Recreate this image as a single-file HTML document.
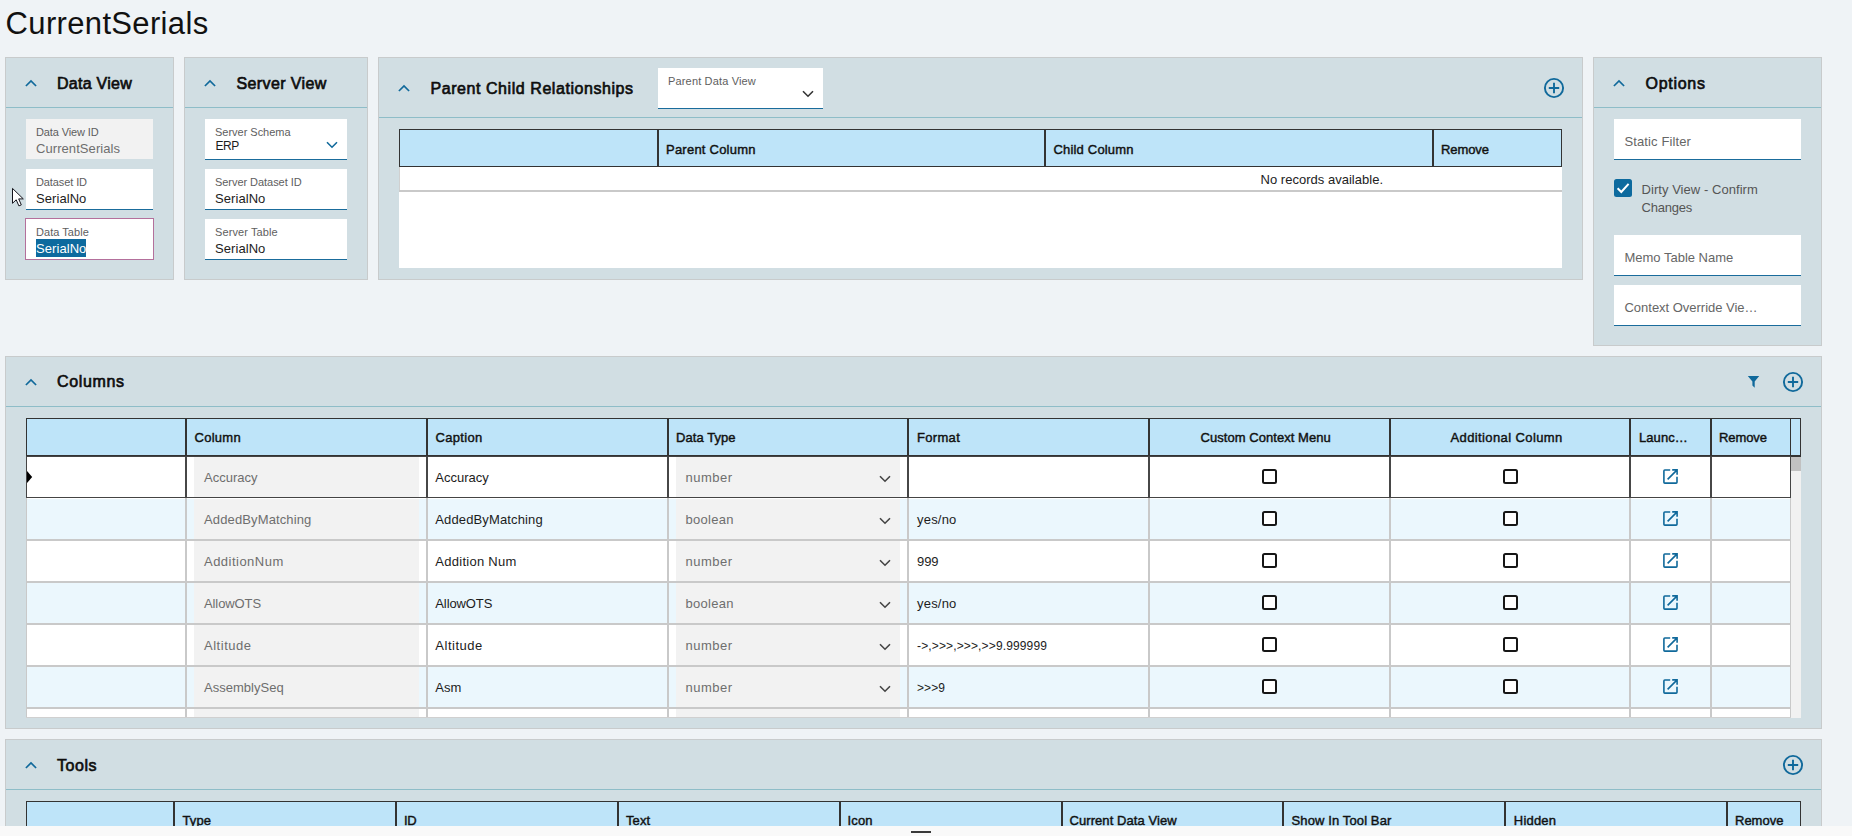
<!DOCTYPE html>
<html lang="en"><head><meta charset="utf-8"><title>CurrentSerials</title>
<style>
html,body{margin:0;padding:0}
body{width:1852px;height:836px;overflow:hidden;position:relative;background:#eff3f6;font-family:"Liberation Sans",sans-serif}
span{position:absolute;white-space:nowrap;line-height:1;display:block}
div,svg.a{position:absolute}
.panel{background:#d1dee3;border:1px solid #c8cbcc;box-sizing:border-box}
.hl{height:1px;background:#8ebdc8}
.th{background:#bee4f9;box-sizing:border-box}
.d{background:#333}
.g{background:#c9c9c9}
.cb{width:15px;height:15px;box-sizing:border-box;border:2px solid #161616;border-radius:2.5px;background:#fff}
</style></head><body>

<span style="left:5.6px;top:7.76px;font-size:31px;color:#111;font-weight:400;letter-spacing:0.34px">CurrentSerials</span>
<div class="panel" style="left:5px;top:57px;width:169px;height:223px"></div>
<div class="hl" style="left:6px;top:107px;width:167px"></div>
<svg class="a" style="left:24px;top:78.2px" width="14" height="10" viewBox="0 0 14 10"><path d="M1.9 8 L7 2.9 L12.1 8" fill="none" stroke="#10699b" stroke-width="1.7"/></svg>
<span style="left:57.0px;top:75.76px;font-size:16px;color:#0d0d0d;font-weight:400;letter-spacing:0.27px;-webkit-text-stroke:0.65px #0d0d0d">Data View</span>
<div class="fld" style="left:26px;top:119px;width:127px;height:40px;background:#f2f2f2"></div>
<span style="left:36.0px;top:126.69px;font-size:11px;color:#5e5e5e;font-weight:400;letter-spacing:-0.12px;">Data View ID</span>
<span style="left:36.0px;top:141.80px;font-size:13px;color:#6e6e6e;font-weight:400;letter-spacing:0.07px;">CurrentSerials</span>
<div class="fld" style="left:26px;top:169px;width:127px;height:40px;background:#fff;border-bottom:1.5px solid #1a6c9c"></div>
<span style="left:36.0px;top:176.69px;font-size:11px;color:#5e5e5e;font-weight:400;letter-spacing:-0.10px;">Dataset ID</span>
<span style="left:36.0px;top:192.00px;font-size:13px;color:#1c1c1c;font-weight:400;letter-spacing:0.07px;">SerialNo</span>
<div class="fld" style="left:25px;top:218px;width:129px;height:42px;background:#fff;border:1px solid #b4709c;box-sizing:border-box"></div>
<span style="left:36.0px;top:226.69px;font-size:11px;color:#5e5e5e;font-weight:400;letter-spacing:0.04px;">Data Table</span>
<div style="left:36px;top:239px;width:50px;height:18px;background:#0d6a9e"></div>
<span style="left:36.0px;top:241.80px;font-size:13px;color:#fff;font-weight:400;letter-spacing:0.07px;">SerialNo</span>
<div class="panel" style="left:184px;top:57px;width:184px;height:223px"></div>
<div class="hl" style="left:185px;top:107px;width:182px"></div>
<svg class="a" style="left:203px;top:78.2px" width="14" height="10" viewBox="0 0 14 10"><path d="M1.9 8 L7 2.9 L12.1 8" fill="none" stroke="#10699b" stroke-width="1.7"/></svg>
<span style="left:236.5px;top:75.76px;font-size:16px;color:#0d0d0d;font-weight:400;letter-spacing:0.38px;-webkit-text-stroke:0.65px #0d0d0d">Server View</span>
<div class="fld" style="left:205px;top:119px;width:142px;height:40px;background:#fff;border-bottom:1.5px solid #1a6c9c"></div>
<span style="left:215.0px;top:126.69px;font-size:11px;color:#5e5e5e;font-weight:400;letter-spacing:-0.02px;">Server Schema</span>
<span style="left:215.4px;top:140.44px;font-size:12px;color:#1c1c1c;font-weight:400;letter-spacing:-0.46px;">ERP</span>
<svg class="a" style="left:325px;top:140px" width="14" height="10" viewBox="0 0 14 10"><path d="M2 2.2 L7 7.2 L12 2.2" fill="none" stroke="#10699b" stroke-width="1.6"/></svg>
<div class="fld" style="left:205px;top:169px;width:142px;height:40px;background:#fff;border-bottom:1.5px solid #1a6c9c"></div>
<span style="left:215.0px;top:176.69px;font-size:11px;color:#5e5e5e;font-weight:400;letter-spacing:-0.05px;">Server Dataset ID</span>
<span style="left:215.0px;top:191.80px;font-size:13px;color:#1c1c1c;font-weight:400;letter-spacing:0.07px;">SerialNo</span>
<div class="fld" style="left:205px;top:219px;width:142px;height:40px;background:#fff;border-bottom:1.5px solid #1a6c9c"></div>
<span style="left:215.0px;top:226.69px;font-size:11px;color:#5e5e5e;font-weight:400;letter-spacing:0.10px;">Server Table</span>
<span style="left:215.0px;top:241.80px;font-size:13px;color:#1c1c1c;font-weight:400;letter-spacing:0.07px;">SerialNo</span>
<div class="panel" style="left:378px;top:57px;width:1205px;height:223px"></div>
<div class="hl" style="left:379px;top:117px;width:1203px"></div>
<svg class="a" style="left:397px;top:82.5px" width="14" height="10" viewBox="0 0 14 10"><path d="M1.9 8 L7 2.9 L12.1 8" fill="none" stroke="#10699b" stroke-width="1.7"/></svg>
<span style="left:430.5px;top:81.06px;font-size:16px;color:#0d0d0d;font-weight:400;letter-spacing:0.56px;-webkit-text-stroke:0.65px #0d0d0d">Parent Child Relationships</span>
<div class="fld" style="left:658px;top:68px;width:165px;height:40px;background:#fff;border-bottom:1.5px solid #1a6c9c"></div>
<span style="left:668.0px;top:75.69px;font-size:11px;color:#5e5e5e;font-weight:400;letter-spacing:0.16px;">Parent Data View</span>
<svg class="a" style="left:801px;top:89.3px" width="14" height="10" viewBox="0 0 14 10"><path d="M2 2.2 L7 7.2 L12 2.2" fill="none" stroke="#333" stroke-width="1.6"/></svg>
<svg class="a" style="left:1542px;top:76px" width="24" height="24" viewBox="0 0 24 24"><circle cx="12" cy="12" r="9.1" fill="none" stroke="#10699b" stroke-width="1.9"/><path d="M12 6.8v10.4M6.8 12h10.4" stroke="#10699b" stroke-width="1.9" fill="none"/></svg>
<div style="left:399px;top:129px;width:1163px;height:139px;background:#fff"></div>
<div class="th" style="left:399px;top:129px;width:1163px;height:38px;border:1px solid #333"></div>
<div class="d" style="left:657px;top:129px;width:2px;height:38px"></div>
<div class="d" style="left:1044px;top:129px;width:2px;height:38px"></div>
<div class="d" style="left:1432px;top:129px;width:2px;height:38px"></div>
<div style="left:399px;top:167px;width:1px;height:24px;background:#d0d0d0"></div>
<div style="left:399px;top:190px;width:1163px;height:1.5px;background:#c9c9c9"></div>
<span style="left:666.0px;top:142.60px;font-size:13px;color:#111;font-weight:400;letter-spacing:0.23px;-webkit-text-stroke:0.42px #111">Parent Column</span>
<span style="left:1053.5px;top:142.60px;font-size:13px;color:#111;font-weight:400;letter-spacing:0.18px;-webkit-text-stroke:0.42px #111">Child Column</span>
<span style="left:1441.0px;top:142.60px;font-size:13px;color:#111;font-weight:400;letter-spacing:-0.08px;-webkit-text-stroke:0.42px #111">Remove</span>
<span style="left:1260.5px;top:173.00px;font-size:13px;color:#222;font-weight:400;letter-spacing:0.02px;">No records available.</span>
<div class="panel" style="left:1593px;top:57px;width:229px;height:289px"></div>
<div class="hl" style="left:1594px;top:107px;width:227px"></div>
<svg class="a" style="left:1612px;top:78.2px" width="14" height="10" viewBox="0 0 14 10"><path d="M1.9 8 L7 2.9 L12.1 8" fill="none" stroke="#10699b" stroke-width="1.7"/></svg>
<span style="left:1645.5px;top:75.56px;font-size:16px;color:#0d0d0d;font-weight:400;letter-spacing:0.71px;-webkit-text-stroke:0.65px #0d0d0d">Options</span>
<div class="fld" style="left:1614px;top:119px;width:187px;height:40px;background:#fff;border-bottom:1.5px solid #1a6c9c"></div>
<span style="left:1624.5px;top:135.20px;font-size:13px;color:#666;font-weight:400;letter-spacing:0.11px;">Static Filter</span>
<div style="left:1614px;top:179px;width:18px;height:18px;background:#0d6a9e;border-radius:2.5px"></div>
<svg class="a" style="left:1614px;top:179px" width="18" height="18" viewBox="0 0 18 18"><path d="M3.6 9.3 L7.3 13 L14.6 4.9" fill="none" stroke="#fff" stroke-width="2"/></svg>
<span style="left:1641.5px;top:183.00px;font-size:13px;color:#555;font-weight:400;letter-spacing:0.05px;">Dirty View - Confirm</span>
<span style="left:1641.5px;top:200.70px;font-size:13px;color:#555;font-weight:400;letter-spacing:-0.22px;">Changes</span>
<div class="fld" style="left:1614px;top:235px;width:187px;height:40px;background:#fff;border-bottom:1.5px solid #1a6c9c"></div>
<span style="left:1624.5px;top:250.90px;font-size:13px;color:#666;font-weight:400;letter-spacing:-0.01px;">Memo Table Name</span>
<div class="fld" style="left:1614px;top:285px;width:187px;height:40px;background:#fff;border-bottom:1.5px solid #1a6c9c"></div>
<span style="left:1624.5px;top:300.90px;font-size:13px;color:#666;font-weight:400;letter-spacing:-0.02px;">Context Override Vie…</span>
<div class="panel" style="left:5px;top:356px;width:1817px;height:373px"></div>
<div class="hl" style="left:6px;top:406px;width:1815px"></div>
<svg class="a" style="left:24px;top:377px" width="14" height="10" viewBox="0 0 14 10"><path d="M1.9 8 L7 2.9 L12.1 8" fill="none" stroke="#10699b" stroke-width="1.7"/></svg>
<span style="left:57.0px;top:374.46px;font-size:16px;color:#0d0d0d;font-weight:400;letter-spacing:0.64px;-webkit-text-stroke:0.65px #0d0d0d">Columns</span>
<svg class="a" style="left:1746px;top:374px" width="16" height="16" viewBox="0 0 16 16"><path d="M1.8 2 H13.2 L8.7 7.6 V13.8 L6.4 11.6 V7.6 Z" fill="#10699b"/></svg>
<svg class="a" style="left:1781px;top:370px" width="24" height="24" viewBox="0 0 24 24"><circle cx="12" cy="12" r="9.1" fill="none" stroke="#10699b" stroke-width="1.9"/><path d="M12 6.8v10.4M6.8 12h10.4" stroke="#10699b" stroke-width="1.9" fill="none"/></svg>
<div style="left:26px;top:418px;width:1775px;height:300px;background:#fff"></div>
<div class="th" style="left:26px;top:418px;width:1775px;height:39px;border:1px solid #333;border-bottom-width:2px"></div>
<div class="d" style="left:185px;top:418px;width:2px;height:38px"></div>
<div class="d" style="left:426px;top:418px;width:2px;height:38px"></div>
<div class="d" style="left:667px;top:418px;width:2px;height:38px"></div>
<div class="d" style="left:907px;top:418px;width:2px;height:38px"></div>
<div class="d" style="left:1148px;top:418px;width:2px;height:38px"></div>
<div class="d" style="left:1389px;top:418px;width:2px;height:38px"></div>
<div class="d" style="left:1629px;top:418px;width:2px;height:38px"></div>
<div class="d" style="left:1710px;top:418px;width:2px;height:38px"></div>
<div class="d" style="left:1790px;top:418px;width:1px;height:38px"></div>
<span style="left:194.5px;top:430.70px;font-size:13px;color:#111;font-weight:400;letter-spacing:0.27px;-webkit-text-stroke:0.42px #111">Column</span>
<span style="left:435.5px;top:430.70px;font-size:13px;color:#111;font-weight:400;letter-spacing:0.33px;-webkit-text-stroke:0.42px #111">Caption</span>
<span style="left:676.0px;top:430.70px;font-size:13px;color:#111;font-weight:400;letter-spacing:0.06px;-webkit-text-stroke:0.42px #111">Data Type</span>
<span style="left:917.0px;top:430.70px;font-size:13px;color:#111;font-weight:400;letter-spacing:0.32px;-webkit-text-stroke:0.42px #111">Format</span>
<span style="left:1200.5px;top:430.70px;font-size:13px;color:#111;font-weight:400;letter-spacing:0.05px;-webkit-text-stroke:0.42px #111">Custom Context Menu</span>
<span style="left:1450.5px;top:430.70px;font-size:13px;color:#111;font-weight:400;letter-spacing:0.39px;-webkit-text-stroke:0.42px #111">Additional Column</span>
<span style="left:1639.0px;top:430.70px;font-size:13px;color:#111;font-weight:400;letter-spacing:0.08px;-webkit-text-stroke:0.42px #111">Launc…</span>
<span style="left:1719.0px;top:430.70px;font-size:13px;color:#111;font-weight:400;letter-spacing:-0.08px;-webkit-text-stroke:0.42px #111">Remove</span>
<div style="left:26px;top:457px;width:1765px;height:41px;background:#fff"></div>
<div style="left:194px;top:457px;width:225px;height:41px;background:#f2f2f2"></div>
<div style="left:676px;top:457px;width:224px;height:41px;background:#f2f2f2"></div>
<span style="left:204.0px;top:470.90px;font-size:13px;color:#6e6e6e;font-weight:400;letter-spacing:0.01px;">Accuracy</span>
<span style="left:435.3px;top:470.90px;font-size:13px;color:#1c1c1c;font-weight:400;letter-spacing:0.01px;">Accuracy</span>
<span style="left:685.5px;top:470.90px;font-size:13px;color:#6e6e6e;font-weight:400;letter-spacing:0.52px;">number</span>
<svg class="a" style="left:878px;top:474.3px" width="14" height="10" viewBox="0 0 14 10"><path d="M2 2.2 L7 7.2 L12 2.2" fill="none" stroke="#444" stroke-width="1.6"/></svg>
<div class="cb" style="left:1262px;top:469px"></div>
<div class="cb" style="left:1503px;top:469px"></div>
<svg class="a" style="left:1662px;top:468px" width="17" height="17" viewBox="0 0 17 17"><path d="M8.2 2 H2.8 Q1.9 2 1.9 2.9 V14.2 Q1.9 15.1 2.8 15.1 H14.1 Q15 15.1 15 14.2 V8.8" fill="none" stroke="#10699b" stroke-width="1.6"/><path d="M5.6 11.4 L14.6 2.4 M10.2 1.9 H15.1 V6.8" fill="none" stroke="#10699b" stroke-width="1.6"/></svg>
<div style="left:26px;top:499px;width:1765px;height:41px;background:#ebf7fd"></div>
<div style="left:194px;top:499px;width:225px;height:41px;background:#f2f2f2"></div>
<div style="left:676px;top:499px;width:224px;height:41px;background:#f2f2f2"></div>
<span style="left:204.0px;top:512.90px;font-size:13px;color:#6e6e6e;font-weight:400;letter-spacing:0.13px;">AddedByMatching</span>
<span style="left:435.3px;top:512.90px;font-size:13px;color:#1c1c1c;font-weight:400;letter-spacing:0.13px;">AddedByMatching</span>
<span style="left:685.5px;top:512.90px;font-size:13px;color:#6e6e6e;font-weight:400;letter-spacing:0.28px;">boolean</span>
<span style="left:917.0px;top:512.90px;font-size:13px;color:#1c1c1c;font-weight:400;letter-spacing:0.20px;">yes/no</span>
<svg class="a" style="left:878px;top:516.3px" width="14" height="10" viewBox="0 0 14 10"><path d="M2 2.2 L7 7.2 L12 2.2" fill="none" stroke="#444" stroke-width="1.6"/></svg>
<div class="cb" style="left:1262px;top:511px"></div>
<div class="cb" style="left:1503px;top:511px"></div>
<svg class="a" style="left:1662px;top:510px" width="17" height="17" viewBox="0 0 17 17"><path d="M8.2 2 H2.8 Q1.9 2 1.9 2.9 V14.2 Q1.9 15.1 2.8 15.1 H14.1 Q15 15.1 15 14.2 V8.8" fill="none" stroke="#10699b" stroke-width="1.6"/><path d="M5.6 11.4 L14.6 2.4 M10.2 1.9 H15.1 V6.8" fill="none" stroke="#10699b" stroke-width="1.6"/></svg>
<div class="g" style="left:26px;top:539px;width:1765px;height:2px"></div>
<div style="left:26px;top:541px;width:1765px;height:41px;background:#fff"></div>
<div style="left:194px;top:541px;width:225px;height:41px;background:#f2f2f2"></div>
<div style="left:676px;top:541px;width:224px;height:41px;background:#f2f2f2"></div>
<span style="left:204.0px;top:554.90px;font-size:13px;color:#6e6e6e;font-weight:400;letter-spacing:0.48px;">AdditionNum</span>
<span style="left:435.3px;top:554.90px;font-size:13px;color:#1c1c1c;font-weight:400;letter-spacing:0.27px;">Addition Num</span>
<span style="left:685.5px;top:554.90px;font-size:13px;color:#6e6e6e;font-weight:400;letter-spacing:0.52px;">number</span>
<span style="left:917.0px;top:554.90px;font-size:13px;color:#1c1c1c;font-weight:400;letter-spacing:-0.10px;">999</span>
<svg class="a" style="left:878px;top:558.3px" width="14" height="10" viewBox="0 0 14 10"><path d="M2 2.2 L7 7.2 L12 2.2" fill="none" stroke="#444" stroke-width="1.6"/></svg>
<div class="cb" style="left:1262px;top:553px"></div>
<div class="cb" style="left:1503px;top:553px"></div>
<svg class="a" style="left:1662px;top:552px" width="17" height="17" viewBox="0 0 17 17"><path d="M8.2 2 H2.8 Q1.9 2 1.9 2.9 V14.2 Q1.9 15.1 2.8 15.1 H14.1 Q15 15.1 15 14.2 V8.8" fill="none" stroke="#10699b" stroke-width="1.6"/><path d="M5.6 11.4 L14.6 2.4 M10.2 1.9 H15.1 V6.8" fill="none" stroke="#10699b" stroke-width="1.6"/></svg>
<div class="g" style="left:26px;top:581px;width:1765px;height:2px"></div>
<div style="left:26px;top:583px;width:1765px;height:41px;background:#ebf7fd"></div>
<div style="left:194px;top:583px;width:225px;height:41px;background:#f2f2f2"></div>
<div style="left:676px;top:583px;width:224px;height:41px;background:#f2f2f2"></div>
<span style="left:204.0px;top:596.90px;font-size:13px;color:#6e6e6e;font-weight:400;letter-spacing:-0.10px;">AllowOTS</span>
<span style="left:435.3px;top:596.90px;font-size:13px;color:#1c1c1c;font-weight:400;letter-spacing:-0.10px;">AllowOTS</span>
<span style="left:685.5px;top:596.90px;font-size:13px;color:#6e6e6e;font-weight:400;letter-spacing:0.28px;">boolean</span>
<span style="left:917.0px;top:596.90px;font-size:13px;color:#1c1c1c;font-weight:400;letter-spacing:0.20px;">yes/no</span>
<svg class="a" style="left:878px;top:600.3px" width="14" height="10" viewBox="0 0 14 10"><path d="M2 2.2 L7 7.2 L12 2.2" fill="none" stroke="#444" stroke-width="1.6"/></svg>
<div class="cb" style="left:1262px;top:595px"></div>
<div class="cb" style="left:1503px;top:595px"></div>
<svg class="a" style="left:1662px;top:594px" width="17" height="17" viewBox="0 0 17 17"><path d="M8.2 2 H2.8 Q1.9 2 1.9 2.9 V14.2 Q1.9 15.1 2.8 15.1 H14.1 Q15 15.1 15 14.2 V8.8" fill="none" stroke="#10699b" stroke-width="1.6"/><path d="M5.6 11.4 L14.6 2.4 M10.2 1.9 H15.1 V6.8" fill="none" stroke="#10699b" stroke-width="1.6"/></svg>
<div class="g" style="left:26px;top:623px;width:1765px;height:2px"></div>
<div style="left:26px;top:625px;width:1765px;height:41px;background:#fff"></div>
<div style="left:194px;top:625px;width:225px;height:41px;background:#f2f2f2"></div>
<div style="left:676px;top:625px;width:224px;height:41px;background:#f2f2f2"></div>
<span style="left:204.0px;top:638.90px;font-size:13px;color:#6e6e6e;font-weight:400;letter-spacing:0.52px;">Altitude</span>
<span style="left:435.3px;top:638.90px;font-size:13px;color:#1c1c1c;font-weight:400;letter-spacing:0.52px;">Altitude</span>
<span style="left:685.5px;top:638.90px;font-size:13px;color:#6e6e6e;font-weight:400;letter-spacing:0.52px;">number</span>
<span style="left:917.0px;top:639.74px;font-size:12px;color:#1c1c1c;font-weight:400;letter-spacing:0.14px;">-&gt;,&gt;&gt;&gt;,&gt;&gt;&gt;,&gt;&gt;9.999999</span>
<svg class="a" style="left:878px;top:642.3px" width="14" height="10" viewBox="0 0 14 10"><path d="M2 2.2 L7 7.2 L12 2.2" fill="none" stroke="#444" stroke-width="1.6"/></svg>
<div class="cb" style="left:1262px;top:637px"></div>
<div class="cb" style="left:1503px;top:637px"></div>
<svg class="a" style="left:1662px;top:636px" width="17" height="17" viewBox="0 0 17 17"><path d="M8.2 2 H2.8 Q1.9 2 1.9 2.9 V14.2 Q1.9 15.1 2.8 15.1 H14.1 Q15 15.1 15 14.2 V8.8" fill="none" stroke="#10699b" stroke-width="1.6"/><path d="M5.6 11.4 L14.6 2.4 M10.2 1.9 H15.1 V6.8" fill="none" stroke="#10699b" stroke-width="1.6"/></svg>
<div class="g" style="left:26px;top:665px;width:1765px;height:2px"></div>
<div style="left:26px;top:667px;width:1765px;height:41px;background:#ebf7fd"></div>
<div style="left:194px;top:667px;width:225px;height:41px;background:#f2f2f2"></div>
<div style="left:676px;top:667px;width:224px;height:41px;background:#f2f2f2"></div>
<span style="left:204.0px;top:680.90px;font-size:13px;color:#6e6e6e;font-weight:400;letter-spacing:0.02px;">AssemblySeq</span>
<span style="left:435.3px;top:680.90px;font-size:13px;color:#1c1c1c;font-weight:400;letter-spacing:0.00px;">Asm</span>
<span style="left:685.5px;top:680.90px;font-size:13px;color:#6e6e6e;font-weight:400;letter-spacing:0.52px;">number</span>
<span style="left:917.0px;top:681.74px;font-size:12px;color:#1c1c1c;font-weight:400;letter-spacing:0.08px;">&gt;&gt;&gt;9</span>
<svg class="a" style="left:878px;top:684.3px" width="14" height="10" viewBox="0 0 14 10"><path d="M2 2.2 L7 7.2 L12 2.2" fill="none" stroke="#444" stroke-width="1.6"/></svg>
<div class="cb" style="left:1262px;top:679px"></div>
<div class="cb" style="left:1503px;top:679px"></div>
<svg class="a" style="left:1662px;top:678px" width="17" height="17" viewBox="0 0 17 17"><path d="M8.2 2 H2.8 Q1.9 2 1.9 2.9 V14.2 Q1.9 15.1 2.8 15.1 H14.1 Q15 15.1 15 14.2 V8.8" fill="none" stroke="#10699b" stroke-width="1.6"/><path d="M5.6 11.4 L14.6 2.4 M10.2 1.9 H15.1 V6.8" fill="none" stroke="#10699b" stroke-width="1.6"/></svg>
<div class="g" style="left:26px;top:707px;width:1765px;height:2px"></div>
<div style="left:194px;top:709px;width:225px;height:9px;background:#f2f2f2"></div>
<div style="left:676px;top:709px;width:224px;height:9px;background:#f2f2f2"></div>
<div class="g" style="left:185px;top:498px;width:2px;height:220px"></div>
<div class="g" style="left:426px;top:498px;width:2px;height:220px"></div>
<div class="g" style="left:667px;top:498px;width:2px;height:220px"></div>
<div class="g" style="left:907px;top:498px;width:2px;height:220px"></div>
<div class="g" style="left:1148px;top:498px;width:2px;height:220px"></div>
<div class="g" style="left:1389px;top:498px;width:2px;height:220px"></div>
<div class="g" style="left:1629px;top:498px;width:2px;height:220px"></div>
<div class="g" style="left:1710px;top:498px;width:2px;height:220px"></div>
<div class="g" style="left:26px;top:498px;width:1px;height:220px"></div>
<div class="g" style="left:1790px;top:498px;width:1px;height:220px"></div>
<div style="left:26px;top:717px;width:1775px;height:1px;background:#d0d0d0"></div>
<div style="left:26px;top:456px;width:1765px;height:42px;border:1px solid #444;box-sizing:border-box"></div>
<div style="left:185px;top:457px;width:2px;height:40px;background:#474747"></div>
<div style="left:426px;top:457px;width:2px;height:40px;background:#474747"></div>
<div style="left:667px;top:457px;width:2px;height:40px;background:#474747"></div>
<div style="left:907px;top:457px;width:2px;height:40px;background:#474747"></div>
<div style="left:1148px;top:457px;width:2px;height:40px;background:#474747"></div>
<div style="left:1389px;top:457px;width:2px;height:40px;background:#474747"></div>
<div style="left:1629px;top:457px;width:2px;height:40px;background:#474747"></div>
<div style="left:1710px;top:457px;width:2px;height:40px;background:#474747"></div>
<svg class="a" style="left:27px;top:471px" width="7" height="12" viewBox="0 0 7 12"><path d="M0 0 L5.2 6 L0 12 Z" fill="#000"/></svg>
<div style="left:1791px;top:457px;width:10px;height:261px;background:#f1f1f1"></div>
<div style="left:1791px;top:457px;width:10px;height:14px;background:#c1c1c1"></div>
<div class="d" style="left:1800px;top:418px;width:1px;height:39px"></div>
<div class="panel" style="left:5px;top:739px;width:1817px;height:121px"></div>
<div class="hl" style="left:6px;top:789px;width:1815px"></div>
<svg class="a" style="left:24px;top:760px" width="14" height="10" viewBox="0 0 14 10"><path d="M1.9 8 L7 2.9 L12.1 8" fill="none" stroke="#10699b" stroke-width="1.7"/></svg>
<span style="left:57.0px;top:758.06px;font-size:16px;color:#0d0d0d;font-weight:400;letter-spacing:0.55px;-webkit-text-stroke:0.65px #0d0d0d">Tools</span>
<svg class="a" style="left:1781px;top:753px" width="24" height="24" viewBox="0 0 24 24"><circle cx="12" cy="12" r="9.1" fill="none" stroke="#10699b" stroke-width="1.9"/><path d="M12 6.8v10.4M6.8 12h10.4" stroke="#10699b" stroke-width="1.9" fill="none"/></svg>
<div class="th" style="left:26px;top:801px;width:1775px;height:40px;border:1px solid #333"></div>
<div class="d" style="left:173px;top:801px;width:2px;height:40px"></div>
<div class="d" style="left:395px;top:801px;width:2px;height:40px"></div>
<div class="d" style="left:617px;top:801px;width:2px;height:40px"></div>
<div class="d" style="left:839px;top:801px;width:2px;height:40px"></div>
<div class="d" style="left:1061px;top:801px;width:2px;height:40px"></div>
<div class="d" style="left:1282px;top:801px;width:2px;height:40px"></div>
<div class="d" style="left:1504px;top:801px;width:2px;height:40px"></div>
<div class="d" style="left:1726px;top:801px;width:2px;height:40px"></div>
<span style="left:182.5px;top:814.40px;font-size:13px;color:#111;font-weight:400;letter-spacing:0.13px;-webkit-text-stroke:0.42px #111">Type</span>
<span style="left:404.0px;top:814.40px;font-size:13px;color:#111;font-weight:400;letter-spacing:-0.40px;-webkit-text-stroke:0.42px #111">ID</span>
<span style="left:626.0px;top:814.40px;font-size:13px;color:#111;font-weight:400;letter-spacing:0.09px;-webkit-text-stroke:0.42px #111">Text</span>
<span style="left:847.5px;top:814.40px;font-size:13px;color:#111;font-weight:400;letter-spacing:0.16px;-webkit-text-stroke:0.42px #111">Icon</span>
<span style="left:1069.5px;top:814.40px;font-size:13px;color:#111;font-weight:400;letter-spacing:0.07px;-webkit-text-stroke:0.42px #111">Current Data View</span>
<span style="left:1291.5px;top:814.40px;font-size:13px;color:#111;font-weight:400;letter-spacing:0.12px;-webkit-text-stroke:0.42px #111">Show In Tool Bar</span>
<span style="left:1513.8px;top:814.40px;font-size:13px;color:#111;font-weight:400;letter-spacing:0.20px;-webkit-text-stroke:0.42px #111">Hidden</span>
<span style="left:1735.0px;top:814.40px;font-size:13px;color:#111;font-weight:400;letter-spacing:-0.00px;-webkit-text-stroke:0.42px #111">Remove</span>
<div style="left:0;top:826px;width:1852px;height:10px;background:#f9f9f9"></div>
<div style="left:911px;top:831px;width:20px;height:2px;background:#3a3a3a"></div>
<svg class="a" style="left:11px;top:186px" width="16" height="22" viewBox="0 0 16 22"><path d="M1.5 2.4 V17.3 L5.2 13.8 L7.9 19.9 L10.3 18.9 L7.7 12.9 H12.3 Z" fill="#fff" stroke="#14141c" stroke-width="1" stroke-linejoin="miter"/></svg>
</body></html>
